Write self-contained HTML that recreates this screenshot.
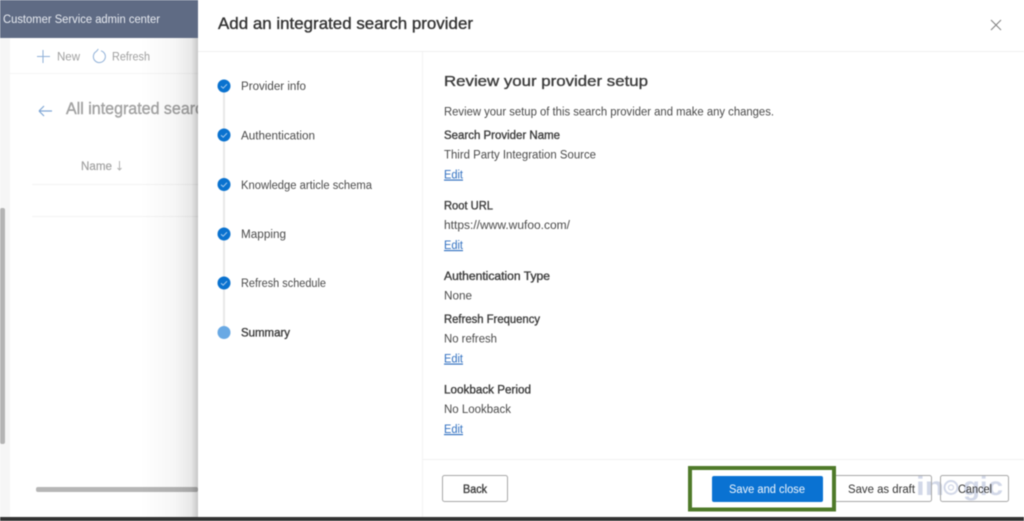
<!DOCTYPE html>
<html>
<head>
<meta charset="utf-8">
<title>Add an integrated search provider</title>
<style>
html,body{margin:0;padding:0;background:#fff;width:1024px;height:521px;overflow:hidden}
svg{display:block;filter:blur(0.45px)}
text{font-family:"Liberation Sans",sans-serif;fill:#4a4a4a}
.b{fill:#3c3c3c;stroke:#3c3c3c;stroke-width:.35px}
.l{fill:#2f6fc0}
</style>
</head>
<body>
<svg width="1024" height="521" viewBox="0 0 1024 521" xmlns="http://www.w3.org/2000/svg">
<defs>
<linearGradient id="sh" x1="0" x2="1" y1="0" y2="0">
<stop offset="0" stop-color="#000" stop-opacity="0"/>
<stop offset="0.6" stop-color="#000" stop-opacity="0.035"/>
<stop offset="0.88" stop-color="#000" stop-opacity="0.09"/>
<stop offset="1" stop-color="#000" stop-opacity="0.22"/>
</linearGradient>
</defs>

<!-- backdrop -->
<rect x="0" y="0" width="1024" height="521" fill="#fff"/>
<rect x="0" y="37" width="10" height="480" fill="#f6f6f6"/>
<rect x="0" y="208" width="5" height="236" rx="2" fill="#b4b4b4"/>
<rect x="0" y="0" width="198" height="38" fill="#5f6b84"/>
<text x="3" y="23" font-size="11.500" style="fill:#e9ecf2" textLength="157" lengthAdjust="spacingAndGlyphs">Customer Service admin center</text>

<path d="M43 50v13M37 56.500h13" stroke="#8fb0d8" stroke-width="1" fill="none"/>
<text x="57" y="60.500" font-size="11.500" style="fill:#a0a0a0" textLength="23" lengthAdjust="spacingAndGlyphs">New</text>
<path d="M96.500 51.300A6 6 0 1 0 101 50.800M96.500 51.300l1.800-2.300" stroke="#8fb0d8" stroke-width="1" fill="none"/>
<text x="112" y="60.500" font-size="11.500" style="fill:#a0a0a0" textLength="38" lengthAdjust="spacingAndGlyphs">Refresh</text>
<rect x="10" y="73" width="188" height="1" fill="#f5f5f5"/>

<path d="M39 111h13M39 111l5-5M39 111l5 5" stroke="#7fa6d6" stroke-width="1.200" fill="none"/>
<text x="66" y="114" font-size="16.500" style="fill:#a3a3a3;stroke:#a3a3a3;stroke-width:.4px" textLength="146" lengthAdjust="spacingAndGlyphs">All integrated search</text>

<text x="81" y="170" font-size="11.500" style="fill:#a0a0a0;stroke:#a0a0a0;stroke-width:.2px" textLength="31" lengthAdjust="spacingAndGlyphs">Name</text>
<path d="M119.500 161v9M117.500 168l2 2 2-2" stroke="#b4b4b4" stroke-width="1" fill="none"/>
<rect x="32" y="184" width="166" height="1" fill="#f3f3f3"/>
<rect x="32" y="216" width="166" height="1" fill="#f3f3f3"/>
<rect x="36" y="487" width="162" height="5" rx="2" fill="#b6b6b6"/>

<rect x="140" y="38" width="58" height="479" fill="url(#sh)"/>

<!-- panel -->
<rect x="198" y="0" width="826" height="517" fill="#fff"/>
<rect x="198" y="51" width="826" height="1" fill="#efefef"/>
<rect x="422" y="52" width="1" height="465" fill="#f3f3f3"/>
<rect x="423" y="459" width="601" height="1" fill="#f1f1f1"/>

<text x="218" y="29" font-size="16.500" style="fill:#333;stroke:#333;stroke-width:.35px" textLength="255" lengthAdjust="spacingAndGlyphs">Add an integrated search provider</text>
<path d="M991 20l10 10M1001 20l-10 10" stroke="#808080" stroke-width="1" fill="none"/>

<!-- steps -->
<rect x="223" y="92" width="2" height="236" fill="#e8e8e8"/>
<g fill="#0a72cf">
<circle cx="224" cy="86" r="6.500"/>
<circle cx="224" cy="135" r="6.500"/>
<circle cx="224" cy="184.500" r="6.500"/>
<circle cx="224" cy="234" r="6.500"/>
<circle cx="224" cy="283" r="6.500"/>
</g>
<circle cx="224" cy="332.500" r="6.500" fill="#69a9e4"/>
<g fill="none" stroke="#a9cdf0" stroke-width="1">
<path d="M221 86.200l2.200 2 3.800-4"/>
<path d="M221 135.200l2.200 2 3.800-4"/>
<path d="M221 184.700l2.200 2 3.800-4"/>
<path d="M221 234.200l2.200 2 3.800-4"/>
<path d="M221 283.200l2.200 2 3.800-4"/>
</g>
<g font-size="11.500">
<text x="241" y="90" textLength="65" lengthAdjust="spacingAndGlyphs">Provider info</text>
<text x="241" y="139.500" textLength="74" lengthAdjust="spacingAndGlyphs">Authentication</text>
<text x="241" y="189" textLength="131" lengthAdjust="spacingAndGlyphs">Knowledge article schema</text>
<text x="241" y="238" textLength="45" lengthAdjust="spacingAndGlyphs">Mapping</text>
<text x="241" y="287" textLength="85" lengthAdjust="spacingAndGlyphs">Refresh schedule</text>
<text x="241" y="336.500" class="b" textLength="49" lengthAdjust="spacingAndGlyphs">Summary</text>
</g>

<!-- content -->
<text x="444" y="86" font-size="15" class="b" textLength="204" lengthAdjust="spacingAndGlyphs">Review your provider setup</text>
<g font-size="11.500">
<text x="444" y="115.500" textLength="330" lengthAdjust="spacingAndGlyphs">Review your setup of this search provider and make any changes.</text>
<text x="444" y="139" class="b" textLength="116" lengthAdjust="spacingAndGlyphs">Search Provider Name</text>
<text x="444" y="158.500" textLength="152" lengthAdjust="spacingAndGlyphs">Third Party Integration Source</text>
<text x="444" y="178.500" class="l" text-decoration="underline" textLength="19" lengthAdjust="spacingAndGlyphs">Edit</text>
<text x="444" y="209.500" class="b" textLength="49" lengthAdjust="spacingAndGlyphs">Root URL</text>
<text x="444" y="229" textLength="126" lengthAdjust="spacingAndGlyphs">https://www.wufoo.com/</text>
<text x="444" y="249" class="l" text-decoration="underline" textLength="19" lengthAdjust="spacingAndGlyphs">Edit</text>
<text x="444" y="280" class="b" textLength="106" lengthAdjust="spacingAndGlyphs">Authentication Type</text>
<text x="444" y="299.500" textLength="28" lengthAdjust="spacingAndGlyphs">None</text>
<text x="444" y="323" class="b" textLength="96" lengthAdjust="spacingAndGlyphs">Refresh Frequency</text>
<text x="444" y="342.500" textLength="53" lengthAdjust="spacingAndGlyphs">No refresh</text>
<text x="444" y="362.500" class="l" text-decoration="underline" textLength="19" lengthAdjust="spacingAndGlyphs">Edit</text>
<text x="444" y="393.500" class="b" textLength="87" lengthAdjust="spacingAndGlyphs">Lookback Period</text>
<text x="444" y="413" textLength="67" lengthAdjust="spacingAndGlyphs">No Lookback</text>
<text x="444" y="433" class="l" text-decoration="underline" textLength="19" lengthAdjust="spacingAndGlyphs">Edit</text>
</g>

<!-- watermark -->
<text x="916" y="495" font-size="26" font-weight="bold" style="fill:#d2d8e8" textLength="28" lengthAdjust="spacingAndGlyphs">in</text>
<circle cx="951" cy="487.500" r="6.500" fill="none" stroke="#d2d8e8" stroke-width="2"/>
<circle cx="951" cy="487.500" r="2.500" fill="none" stroke="#d2d8e8" stroke-width="1.200"/>
<text x="963" y="495" font-size="26" font-weight="bold" style="fill:#d2d8e8" textLength="40" lengthAdjust="spacingAndGlyphs">gic</text>

<!-- buttons -->
<rect x="442.500" y="475.500" width="65" height="26" rx="2" fill="#fff" stroke="#a8a8a8"/>
<text x="463" y="493" font-size="11.500" class="b" textLength="24" lengthAdjust="spacingAndGlyphs">Back</text>

<rect x="833.500" y="475.500" width="98" height="26" rx="2" fill="none" stroke="#a8a8a8"/>
<text x="848" y="493" font-size="11.500" style="fill:#333" textLength="67" lengthAdjust="spacingAndGlyphs">Save as draft</text>

<rect x="940.500" y="475.500" width="68" height="26" rx="2" fill="none" stroke="#a8a8a8"/>
<text x="958" y="493" font-size="11.500" style="fill:#333" textLength="34" lengthAdjust="spacingAndGlyphs">Cancel</text>

<rect x="712" y="476" width="111" height="26" rx="2" fill="#0a72d2"/>
<text x="729" y="493" font-size="11.500" style="fill:#f2f7fd" textLength="76" lengthAdjust="spacingAndGlyphs">Save and close</text>

<rect x="690" y="468" width="144" height="41.500" fill="none" stroke="#4f7a2a" stroke-width="4"/>

<!-- bottom bar -->
<rect x="0" y="517" width="1024" height="4" fill="#333"/>
</svg>
</body>
</html>
